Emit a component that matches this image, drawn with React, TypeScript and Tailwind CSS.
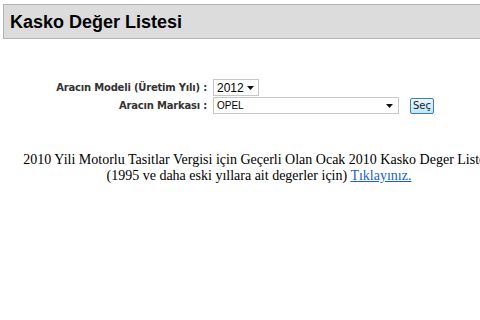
export default function App() {
  return (
    <div className="w-[480px] h-[320px] overflow-hidden bg-white relative">
      <div className="pt-[4px] pl-[3px]">
        <div className="h-[35px] w-[520px] bg-[#dcdcdc] border border-[#b4b4b4] flex items-center pl-[6px]">
          <h1 className="text-[18px] font-bold text-black font-['Liberation_Sans',Arial,sans-serif] leading-none">
            Kasko Değer Listesi
          </h1>
        </div>
      </div>

      <div className="mt-[40px] flex flex-col gap-[1px] font-['DejaVu_Sans',Tahoma,sans-serif]">
        <div className="flex items-center h-[17px]">
          <span className="w-[207px] text-right text-[10px] font-bold text-[#333] tracking-[-0.2px]">
            Aracın Modeli (Üretim Yılı) :
          </span>
          <div className="ml-[6px] w-[46px] h-[17px] border border-[#c8c8c8] bg-white flex items-center justify-between pl-[3px] pr-[4px] text-[12px] text-black font-['Liberation_Sans',Arial,sans-serif]">
            <span>2012</span>
            <Caret />
          </div>
        </div>
        <div className="flex items-center h-[17px]">
          <span className="w-[207px] text-right text-[10px] font-bold text-[#333] tracking-[-0.2px]">
            Aracın Markası :
          </span>
          <div className="ml-[6px] w-[186px] h-[17px] border border-[#c8c8c8] bg-white flex items-center justify-between pl-[3px] pr-[5px] text-[10px] text-black font-['Liberation_Sans',Arial,sans-serif]">
            <span>OPEL</span>
            <Caret />
          </div>
          <button className="ml-[11px] h-[16px] px-[2px] border border-[#3c7fb1] rounded-[2px] bg-gradient-to-b from-[#eaf6fd] to-[#bee6fd] text-[10px] text-[#222] leading-none font-['DejaVu_Sans',Tahoma,sans-serif]">
            Seç
          </button>
        </div>
      </div>

      <div className="mt-[38px] w-[518px] text-center text-[14px] leading-[16px] text-black font-['Liberation_Serif','Times_New_Roman',serif]">
        <p className="whitespace-nowrap">
          2010 Yili Motorlu Tasitlar Vergisi için Geçerli Olan Ocak 2010 Kasko Deger Listesi
        </p>
        <p>
          (1995 ve daha eski yıllara ait degerler için){" "}
          <a href="#" className="text-[#1a5fd1] underline">
            Tıklayınız.
          </a>
        </p>
      </div>
    </div>
  );
}

function Caret() {
  return (
    <svg width="7" height="4" viewBox="0 0 7 4" className="shrink-0">
      <path d="M0 0h7L3.5 4z" fill="#111" />
    </svg>
  );
}
